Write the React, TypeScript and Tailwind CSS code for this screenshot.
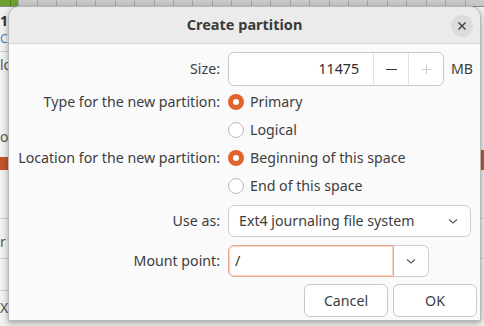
import React from 'react';

const font = { fontFamily: '"Noto Sans", "DejaVu Sans", sans-serif' };

function Radio({ checked, label }: { checked?: boolean; label: string }) {
  return (
    <div className="flex h-[28px] items-center gap-[6px]">
      {checked ? (
        <span className="flex h-[16px] w-[16px] items-center justify-center rounded-full bg-[#e2622d]">
          <span className="h-[6px] w-[6px] rounded-full bg-white" />
        </span>
      ) : (
        <span className="h-[16px] w-[16px] rounded-full border border-[#bfbab5] bg-white" />
      )}
      <span>{label}</span>
    </div>
  );
}

function Chevron() {
  return (
    <svg width="12" height="8" viewBox="0 0 12 8" fill="none">
      <path d="M2 2.5 L6 6 L10 2.5" stroke="#5a5a5a" strokeWidth="1.2" />
    </svg>
  );
}

function Background() {
  return (
    <div className="absolute inset-0 bg-[#f2f2f2] text-[14px] leading-none text-[#555]" style={font}>
      {/* top strip */}
      <div className="flex h-[7px] border-b border-[#8a8a8a] bg-[#c9c9c9]">
        <div className="w-[11px] border-r border-[#4d7a18] bg-[#6d9f31]" />
        <div className="w-[7px] bg-[#6d9f31]" />
        {Array.from({ length: 24 }).map((_, i) => (
          <div key={i} className="w-[20px] border-l border-[#a5a5a5]" />
        ))}
      </div>
      {/* left strip, mostly hidden behind the dialog */}
      <div className="absolute left-0 top-[14px] font-bold text-[#333]">1a</div>
      <div className="absolute left-0 top-[33px] text-[12px] text-[#4a7fc1]">Ca</div>
      <div className="absolute left-0 top-[51px] h-px w-[8px] bg-[#cfcfcf]" />
      <div className="absolute left-0 top-[58px]">lo</div>
      <div className="absolute left-0 top-[130px]">oo</div>
      <div className="absolute left-0 top-[157px] h-[13px] w-[8px] bg-[#c2562a]" />
      <div className="absolute left-0 top-[218px] h-px w-[8px] bg-[#cfcfcf]" />
      <div className="absolute left-0 top-[235px]">r i</div>
      <div className="absolute left-0 top-[258px] h-px w-[8px] bg-[#cfcfcf]" />
      <div className="absolute left-0 top-[290px] h-px w-[8px] bg-[#cfcfcf]" />
      <div className="absolute left-0 top-[301px]">X</div>
      {/* right strip */}
      <div className="absolute right-0 top-[150px] h-[20px] w-[4px] bg-[#c2562a]" />
      <div className="absolute right-0 top-[218px] h-px w-[4px] bg-[#cfcfcf]" />
      <div className="absolute right-0 top-[258px] h-px w-[4px] bg-[#cfcfcf]" />
    </div>
  );
}

export default function App() {
  return (
    <div className="relative h-[326px] w-[484px] overflow-hidden" style={font}>
      <Background />

      {/* Dialog window */}
      <div className="absolute left-[8px] top-[6px] flex h-[315px] w-[473px] flex-col overflow-hidden rounded-t-[11px] border border-[#b8b8b8] bg-[#fafafa] text-[14.2px] text-[#3d3d3d] shadow-[0_2px_6px_rgba(0,0,0,0.35)]">
        {/* Header */}
        <div className="relative flex h-[37px] shrink-0 items-center justify-center border-b border-[#d6d6d6] bg-[#ebebeb]">
          <span className="text-[14.5px] font-bold text-[#3a3a3a]">Create partition</span>
          <button className="absolute right-[7px] top-[8px] flex h-[22px] w-[22px] items-center justify-center rounded-full bg-[#dcdcdc] text-[#3d3d3d]">
            <svg width="10" height="10" viewBox="0 0 10 10">
              <path d="M1.5 1.5 L8.5 8.5 M8.5 1.5 L1.5 8.5" stroke="#3d3d3d" strokeWidth="1.4" />
            </svg>
          </button>
        </div>

        {/* Body */}
        <div className="grid grid-cols-[211px_1fr] gap-x-[8px] pt-[8px]">
          {/* Size */}
          <div className="flex h-[34px] items-center justify-end">Size:</div>
          <div className="flex h-[34px] items-center gap-[7px]">
            <div className="flex h-[34px] w-[216px] overflow-hidden rounded-[6px] border border-[#cdc7c2] bg-white">
              <div className="flex flex-1 items-center justify-end pr-[14px] text-[#2e2e2e]">11475</div>
              <div className="flex w-[35px] items-center justify-center border-l border-[#e3e0dd]">
                <span className="h-px w-[11px] bg-[#3d3d3d]" />
              </div>
              <div className="flex w-[35px] items-center justify-center border-l border-[#e3e0dd]">
                <svg width="11" height="11" viewBox="0 0 11 11">
                  <path d="M5.5 0.5 V10.5 M0.5 5.5 H10.5" stroke="#cfcfcf" strokeWidth="1.1" />
                </svg>
              </div>
            </div>
            <span>MB</span>
          </div>

          {/* Type */}
          <div className="mt-[2px] flex h-[28px] items-center justify-end">Type for the new partition:</div>
          <div className="mt-[2px]"><Radio checked label="Primary" /></div>
          <div />
          <Radio label="Logical" />

          {/* Location */}
          <div className="flex h-[28px] items-center justify-end">Location for the new partition:</div>
          <Radio checked label="Beginning of this space" />
          <div />
          <Radio label="End of this space" />

          {/* Use as */}
          <div className="mt-[5px] flex h-[32px] items-center justify-end">Use as:</div>
          <div className="mt-[5px] pr-[9px]">
            <div className="flex h-[32px] items-center justify-between rounded-[6px] border border-[#d2ccc7] bg-white pl-[10px] pr-[11px]">
              <span>Ext4 journaling file system</span>
              <Chevron />
            </div>
          </div>

          {/* Mount point */}
          <div className="mt-[8px] flex h-[32px] items-center justify-end">Mount point:</div>
          <div className="mt-[8px] flex">
            <div className="flex h-[32px] w-[166px] items-center rounded-l-[6px] border border-[#e8a98b] bg-white pl-[6px] text-[#2e2e2e] shadow-[inset_0_0_0_1px_#f3d2c2]">
              /
            </div>
            <div className="flex h-[32px] w-[35px] items-center justify-center rounded-r-[6px] border border-l-0 border-[#d2ccc7] bg-white">
              <Chevron />
            </div>
          </div>
        </div>

        {/* Actions */}
        <div className="mt-[7px] flex justify-end gap-[5px] pr-[3px]">
          <button className="h-[33px] w-[84px] rounded-[6px] border border-[#cdc7c2] bg-white text-[#3d3d3d]">Cancel</button>
          <button className="h-[33px] w-[84px] rounded-[6px] border border-[#cdc7c2] bg-white text-[#3d3d3d]">OK</button>
        </div>
      </div>
    </div>
  );
}
